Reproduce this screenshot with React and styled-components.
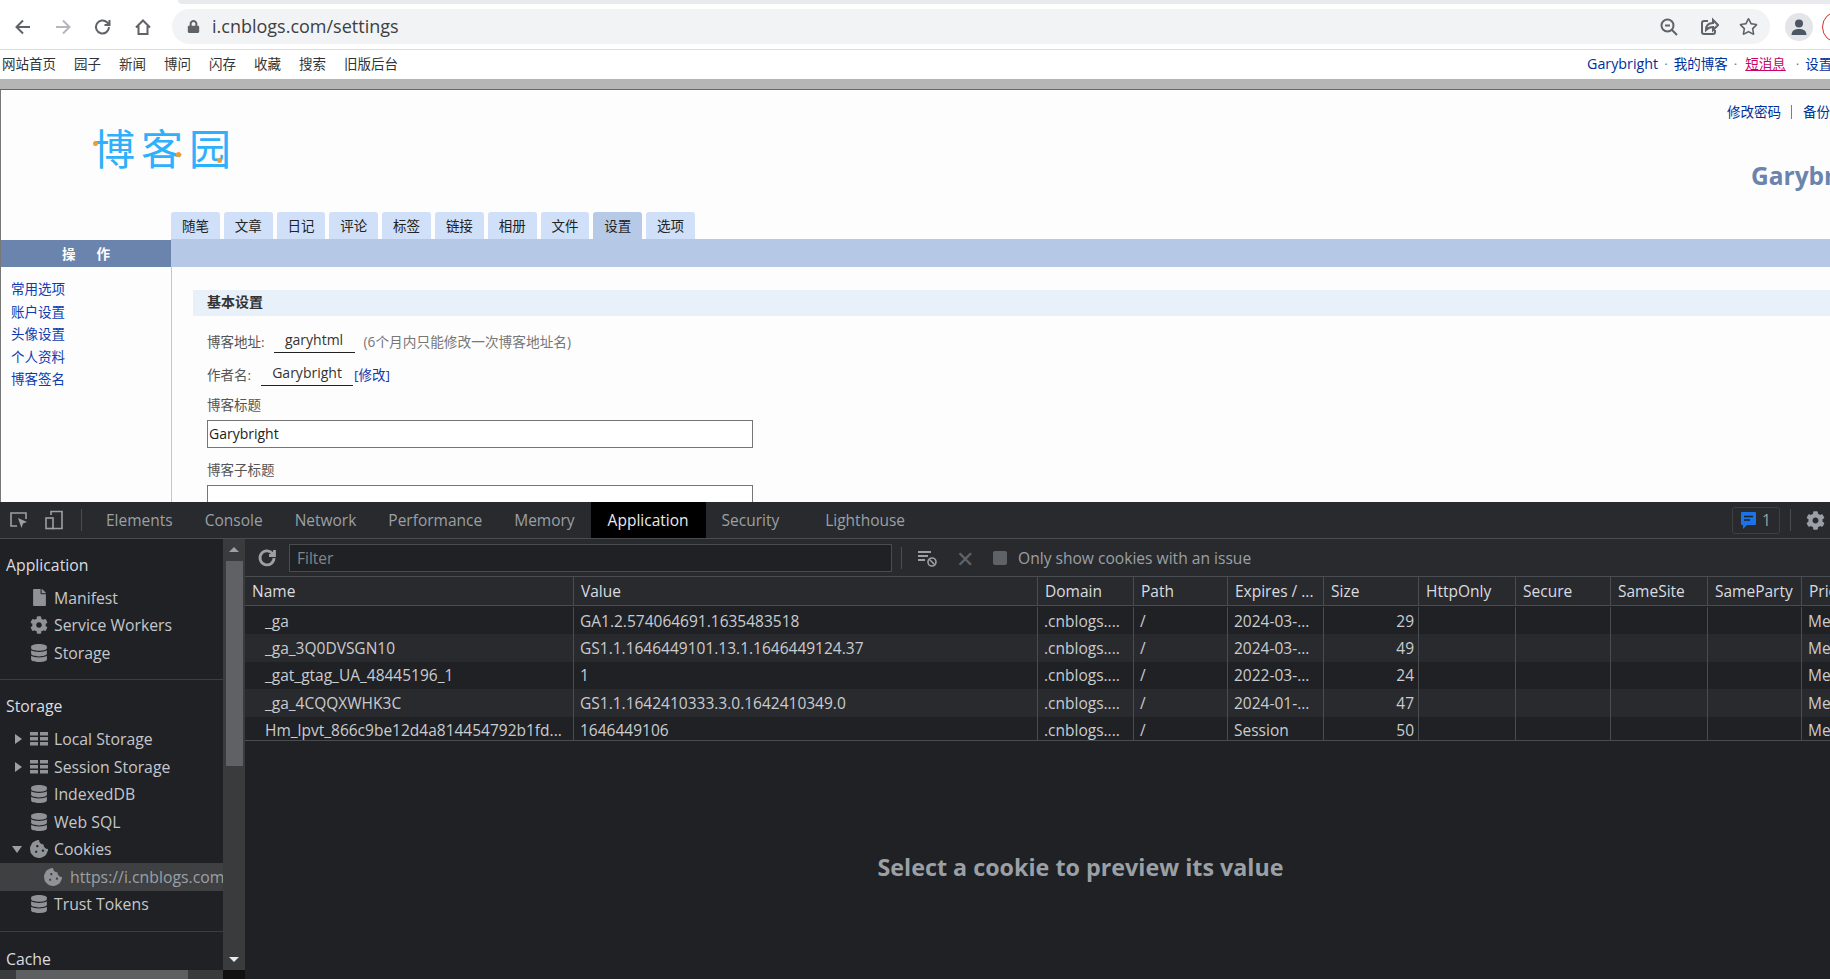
import React from 'react';
import styled, { createGlobalStyle } from 'styled-components';
import { FaCog, FaCookieBite, FaDatabase, FaFile, FaLock, FaRegStar } from 'react-icons/fa';

const GlobalStyle = createGlobalStyle`
  html, body {
    margin: 0;
    padding: 0;
    background: #fff;
    overflow: hidden;
  }
  * {
    box-sizing: border-box;
  }
`;

const uiFont = '"Open Sans", "Noto Sans CJK SC", sans-serif';
const pageFont = '"Open Sans", "Noto Sans CJK SC", sans-serif';

const Screen = styled.div`
  width: 1830px;
  height: 979px;
  display: flex;
  flex-direction: column;
  overflow: hidden;
  font-family: ${pageFont};
`;

/* browser chrome */
const TabStrip = styled.div`
  height: 4px;
  flex: none;
  background: #e8eaed;
  margin-left: 178px;
  border-bottom-left-radius: 4px;
`;

const Toolbar = styled.div`
  height: 46px;
  flex: none;
  display: flex;
  align-items: center;
  border-bottom: 1px solid #dadce0;
  overflow: hidden;
`;

const NavGroup = styled.div`
  width: 172px;
  flex: none;
  display: flex;
  align-items: center;
  padding-left: 13px;
  gap: 20px;
`;

const NavIcon = styled.svg`
  width: 20px;
  height: 20px;
  flex: none;
  fill: none;
  stroke: ${p => p.$color || '#5f6368'};
  stroke-width: 2;
`;

const Omnibox = styled.div`
  width: 1598px;
  height: 35px;
  flex: none;
  display: flex;
  align-items: center;
  background: #f1f3f4;
  border-radius: 18px;
  padding: 0 12px 0 15px;
  color: #5f6368;
`;

const Url = styled.span`
  margin-left: 12px;
  padding-bottom: 2px;
  flex: 1;
  font: 18px ${uiFont};
  color: #3c4043;
`;

const OmniActions = styled.div`
  display: flex;
  align-items: center;
  gap: 20px;
`;

const Avatar = styled.div`
  width: 28px;
  height: 28px;
  flex: none;
  margin-left: 15px;
  border-radius: 50%;
  background: #e3e5e9;
  display: flex;
  align-items: center;
  justify-content: center;
`;

const UpdatePill = styled.div`
  width: 32px;
  height: 32px;
  flex: none;
  margin-left: 9px;
  border-radius: 50%;
  border: 1px solid #d93025;
`;

const BookmarkBar = styled.div`
  height: 29px;
  flex: none;
  display: flex;
  align-items: center;
  justify-content: space-between;
  padding: 0 0 3px 2px;
  background: #fff;
  font-size: 13.5px;
  white-space: nowrap;
  overflow: hidden;
`;

const BookmarkLeft = styled.div`
  display: flex;
  gap: 18px;
  color: #333;
`;

const BookmarkRight = styled.div`
  display: flex;
  align-items: baseline;
  gap: 6px;
  width: 243px;
  flex: none;
  color: #00309c;
`;

const UserName = styled.span`
  font-size: 14.3px;
`;

const Dot = styled.span`
  color: #777;
`;

const MessageLink = styled.span`
  color: #cc0066;
  text-decoration: underline;
  padding: 0 4px 0 2px;
`;

const GreyBand = styled.div`
  height: 11px;
  flex: none;
  background: #b5b5b5;
  border-bottom: 1px solid #666;
`;

/* cnblogs page */
const Page = styled.div`
  height: 412px;
  flex: none;
  border-left: 1px solid #777;
  background: #fdfdfd;
  overflow: hidden;
`;

const PageTop = styled.div`
  height: 122px;
  display: flex;
  justify-content: space-between;
`;

const Logo = styled.div`
  position: relative;
  margin: 32px 0 0 92px;
  width: 140px;
  height: 50px;
  font: 400 42px/50px "Noto Sans CJK SC", sans-serif;
  letter-spacing: 6px;
  color: #2fb0fa;
  white-space: nowrap;
`;

const LogoDot = styled.i`
  position: absolute;
  width: 5px;
  height: 5px;
  border-radius: 50%;
  background: #f7992f;
  left: ${p => p.$x}px;
  top: ${p => p.$y}px;
`;

const TopRight = styled.div`
  width: 103px;
  flex: none;
  overflow: hidden;
  white-space: nowrap;
`;

const TopLinks = styled.div`
  margin-top: 13px;
  display: flex;
  align-items: center;
  gap: 8px;
  font-size: 13.5px;
  line-height: 18px;
  color: #00309c;
`;

const Divider = styled.span`
  width: 1px;
  height: 14px;
  background: #6a7fa5;
  margin: 0 3px 0 2px;
`;

const SiteName = styled.div`
  margin: 39px 0 0 24px;
  font-size: 24.5px;
  line-height: 32px;
  font-weight: 700;
  color: #6a84ae;
`;

const AdminTabs = styled.div`
  height: 27px;
  display: flex;
  gap: 4px;
  padding-left: 170px;
`;

const AdminTab = styled.div`
  width: 48.8px;
  display: flex;
  align-items: center;
  justify-content: center;
  padding-bottom: 2px;
  border-radius: 3px 3px 0 0;
  background: ${p => (p.$active ? '#b6c9e6' : '#cfe0f8')};
  color: #222;
  font-size: 13.5px;
`;

const BandRow = styled.div`
  height: 28px;
  display: flex;
`;

const BandTitle = styled.div`
  width: 170px;
  flex: none;
  margin-top: 1px;
  display: flex;
  align-items: center;
  justify-content: center;
  gap: 21px;
  padding-bottom: 2px;
  background: #6a84ae;
  color: #fff;
  font-size: 13.5px;
  font-weight: 700;
`;

const Band = styled.div`
  flex: 1;
  background: #b5c9e7;
`;

const ContentRow = styled.div`
  display: flex;
  height: 235px;
`;

const SideLinks = styled.div`
  width: 171px;
  flex: none;
  border-right: 1px solid #b5c9e7;
  padding: 11px 0 0 10px;
  display: flex;
  flex-direction: column;
`;

const SideLink = styled.div`
  height: 22.5px;
  line-height: 22.5px;
  font-size: 13.5px;
  color: #0d3bb0;
`;

const MainPane = styled.div`
  flex: 1;
  padding: 23px 0 0 21px;
`;

const SectionTitle = styled.div`
  height: 26px;
  padding-left: 14px;
  background: #e8f0fa;
  color: #333;
  font-size: 14px;
  font-weight: 700;
  line-height: 23px;
`;

const Form = styled.div`
  padding: 13px 0 0 14px;
  color: #555;
  font-size: 13.5px;
`;

const FieldRow = styled.div`
  display: flex;
  align-items: center;
  height: 24px;
  margin-bottom: ${p => p.$gap || 0}px;
  white-space: nowrap;
`;

const FixedValue = styled.span`
  width: ${p => p.$w}px;
  margin-left: ${p => p.$left}px;
  text-align: center;
  height: 24px;
  line-height: 22px;
  border-bottom: 1px solid #222;
  color: #333;
  font-size: 14px;
`;

const Hint = styled.span`
  margin-left: 9px;
  color: #777;
  font-size: 13.7px;
`;

const EditLink = styled.span`
  margin-left: 1px;
  color: #0d3bb0;
`;

const FieldLabel = styled.div`
  height: 18px;
  line-height: 16px;
  margin-top: ${p => p.$top}px;
`;

const TextBox = styled.div`
  width: 546px;
  height: 28px;
  margin-top: 5px;
  padding-left: 1px;
  border: 1px solid #767676;
  background: #fff;
  color: #222;
  font-size: 14px;
  line-height: 26px;
`;

/* devtools */
const Devtools = styled.div`
  flex: 1;
  min-height: 0;
  display: flex;
  flex-direction: column;
  background: #202124;
  font-family: ${uiFont};
  color: #bdc1c6;
  overflow: hidden;
`;

const DevTabs = styled.div`
  height: 37px;
  flex: none;
  display: flex;
  align-items: stretch;
  background: #292a2d;
  border-bottom: 1px solid #494c50;
`;

const DevLeft = styled.div`
  width: 90px;
  flex: none;
  display: flex;
  align-items: center;
  padding-left: 8px;
  gap: 13px;
`;

const DevIcon = styled.svg`
  width: 22px;
  height: 22px;
  flex: none;
  margin-left: ${p => p.$left || 0}px;
  fill: none;
  stroke: #9aa0a6;
  stroke-width: 1.6;
`;

const VSep = styled.span`
  width: 1px;
  height: 22px;
  flex: none;
  margin-left: ${p => p.$left || 0}px;
  background: #494c50;
`;

const DevTab = styled.div`
  padding: 0 ${p => (p.$active ? 17 : 16)}px;
  margin-right: ${p => p.$after || 0}px;
  display: flex;
  align-items: center;
  font-size: 15.5px;
  background: ${p => (p.$active ? '#000' : 'transparent')};
  color: ${p => (p.$active ? '#e8eaed' : '#9aa0a6')};
`;

const DevRight = styled.div`
  margin-left: auto;
  display: flex;
  align-items: center;
  padding-right: 5px;
  color: #9aa0a6;
`;

const IssueBadge = styled.div`
  width: 48px;
  height: 27px;
  display: flex;
  align-items: center;
  justify-content: center;
  gap: 6px;
  border: 1px solid #3c4043;
  border-radius: 3px;
  font-size: 15.5px;
  margin-right: 10px;
`;

const GearWrap = styled.div`
  margin-left: 15px;
  display: flex;
  font-size: 19px;
`;

const DevBody = styled.div`
  flex: 1;
  min-height: 0;
  display: flex;
`;

const Sidebar = styled.div`
  width: 245px;
  flex: none;
  display: grid;
  grid-template-columns: 223px 22px;
  grid-template-rows: 1fr 9px;
  min-height: 0;
`;

const Tree = styled.div`
  overflow: hidden;
  white-space: nowrap;
  font-size: 15.8px;
  padding-top: 12px;
`;

const TreeHead = styled.div`
  height: 28px;
  line-height: 28px;
  padding-left: 6px;
  color: #dadce0;
  margin-bottom: ${p => p.$after || 0}px;
`;

const TreeItem = styled.div`
  height: 27.5px;
  display: flex;
  align-items: center;
  padding-left: ${p => (p.$deep ? 44 : 12)}px;
  background: ${p => (p.$selected ? '#3f4042' : 'transparent')};
  color: ${p => (p.$selected ? '#9aa0a6' : '#c4c7cb')};
`;

const Caret = styled.span`
  width: 0;
  height: 0;
  flex: none;
  margin: 0 3px;
  ${p =>
    p.$open
      ? 'border-left: 5px solid transparent; border-right: 5px solid transparent; border-top: 7px solid #9aa0a6; margin: 0;'
      : 'border-top: 5px solid transparent; border-bottom: 5px solid transparent; border-left: 7px solid #9aa0a6;'}
`;

const CaretSlot = styled.span`
  width: 18px;
  flex: none;
  display: flex;
`;

const TreeIcon = styled.span`
  width: 18px;
  margin-right: 6px;
  flex: none;
  display: flex;
  justify-content: center;
  color: #8f9398;
  font-size: ${p => p.$size || 18}px;
`;

const DeepIcon = styled(TreeIcon)`
  margin-right: 8px;
`;

const TreeRule = styled.div`
  height: 1px;
  background: #3c3d40;
  margin: ${p => p.$m};
`;

const VScroll = styled.div`
  background: #3a3b3d;
  display: flex;
  flex-direction: column;
  align-items: center;
  padding-top: 8px;
  min-height: 0;
`;

const ArrowUp = styled.span`
  width: 0;
  height: 0;
  border-left: 5px solid transparent;
  border-right: 5px solid transparent;
  border-bottom: 5px solid #9aa0a6;
`;

const ArrowDown = styled.span`
  width: 0;
  height: 0;
  margin-top: auto;
  margin-bottom: 8px;
  border-left: 5px solid transparent;
  border-right: 5px solid transparent;
  border-top: 5px solid #e8eaed;
`;

const Thumb = styled.div`
  width: 17px;
  height: 205px;
  margin-top: 9px;
  background: #5f6164;
`;

const HScroll = styled.div`
  background: #3a3b3d;
  padding-left: 16px;
`;

const HThumb = styled.div`
  width: 172px;
  height: 100%;
  background: #5e5f61;
`;

const ScrollCorner = styled.div`
  background: #111;
`;

const CookiePane = styled.div`
  flex: 1;
  min-width: 0;
  display: flex;
  flex-direction: column;
  white-space: nowrap;
`;

const FilterBar = styled.div`
  height: 37px;
  flex: none;
  display: flex;
  align-items: center;
  background: #292a2d;
  padding-left: 11px;
  color: #9aa0a6;
`;

const FilterInput = styled.div`
  width: 603px;
  height: 28px;
  margin-left: 11px;
  padding-left: 7px;
  border: 1px solid #4a4c50;
  background: #202124;
  color: #80868b;
  font-size: 15.5px;
  line-height: 27px;
`;

const ClearX = styled.span`
  margin: 0 19px 0 18px;
  color: #5f6368;
  font-size: 22px;
  line-height: 22px;
  font-weight: 300;
`;

const Check = styled.span`
  width: 14px;
  height: 14px;
  flex: none;
  border-radius: 2px;
  background: #5f6368;
`;

const CheckLabel = styled.span`
  margin-left: 11px;
  font-size: 15.6px;
  color: #9aa0a6;
`;

const columns = '329px 464px 96px 94px 96px 95px 97px 95px 97px 94px 28px';

const HeadRow = styled.div`
  height: 30px;
  flex: none;
  display: grid;
  grid-template-columns: ${columns};
  background: #292a2d;
  border-top: 1px solid #494c50;
  border-bottom: 1px solid #494c50;
  color: #dadce0;
  font-size: 15.5px;
`;

const Cell = styled.div`
  padding: 0 ${p => (p.$num ? 4 : 6)}px 0 ${p => (p.$indent ? 20 : 6)}px;
  display: flex;
  align-items: center;
  justify-content: ${p => (p.$num ? 'flex-end' : 'flex-start')};
  border-right: 1px solid #494c50;
  overflow: hidden;
  &:last-child {
    border-right: none;
  }
`;

const HeadCell = styled(Cell)`
  padding-left: 7px;
`;

const Rows = styled.div`
  height: 135px;
  flex: none;
  padding-top: 1px;
  border-bottom: 1px solid #494c50;
  overflow: hidden;
`;

const Row = styled.div`
  height: 27.4px;
  display: grid;
  grid-template-columns: ${columns};
  background: ${p => (p.$stripe ? '#292a2d' : 'transparent')};
  color: #c9ccd0;
  font-size: 15.5px;
`;

const Preview = styled.div`
  flex: 1;
  display: flex;
  align-items: flex-start;
  justify-content: center;
  padding: 110px 0 0 86px;
  color: #9aa0a6;
  font-size: 23.3px;
  font-weight: 700;
`;

const bookmarks = ['网站首页', '园子', '新闻', '博问', '闪存', '收藏', '搜索', '旧版后台'];
const adminTabs = ['随笔', '文章', '日记', '评论', '标签', '链接', '相册', '文件', '设置', '选项'];
const sideLinks = ['常用选项', '账户设置', '头像设置', '个人资料', '博客签名'];
const devTabs = ['Elements', 'Console', 'Network', 'Performance', 'Memory', 'Application', 'Security', 'Lighthouse'];
const headers = ['Name', 'Value', 'Domain', 'Path', 'Expires / ...', 'Size', 'HttpOnly', 'Secure', 'SameSite', 'SameParty', 'Priority'];
const cookies = [
  ['_ga', 'GA1.2.574064691.1635483518', '2024-03-...', 29],
  ['_ga_3Q0DVSGN10', 'GS1.1.1646449101.13.1.1646449124.37', '2024-03-...', 49],
  ['_gat_gtag_UA_48445196_1', '1', '2022-03-...', 24],
  ['_ga_4CQQXWHK3C', 'GS1.1.1642410333.3.0.1642410349.0', '2024-01-...', 47],
  ['Hm_lpvt_866c9be12d4a814454792b1fd...', '1646449106', 'Session', 50],
];

const GridGlyph = () => (
  <svg width="18" height="14" viewBox="0 0 18 14" fill="#8f9398">
    <rect x="0" y="0" width="8" height="3.5" />
    <rect x="10" y="0" width="8" height="3.5" />
    <rect x="0" y="5" width="8" height="3.5" />
    <rect x="10" y="5" width="8" height="3.5" />
    <rect x="0" y="10" width="8" height="3.5" />
    <rect x="10" y="10" width="8" height="3.5" />
  </svg>
);

const App = () => (
  <Screen>
    <GlobalStyle />
    <TabStrip />
    <Toolbar>
      <NavGroup>
        <NavIcon viewBox="0 0 20 20"><path d="M17 10H4M10 3.5 3.5 10l6.5 6.5" /></NavIcon>
        <NavIcon viewBox="0 0 20 20" $color="#b4b7bb"><path d="M3 10h13M10 3.5l6.500 6.500-6.500 6.500" /></NavIcon>
        <NavIcon viewBox="0 0 20 20"><path d="M16 10a6.500 6.500 0 1 1-2-4.700L16.500 8M16.500 3v5h-5" /></NavIcon>
        <NavIcon viewBox="0 0 20 20"><path d="M3 10.500 10 3.500l7 7M5.500 9v8h9V9" /></NavIcon>
      </NavGroup>
      <Omnibox>
        <FaLock size={13} />
        <Url>i.cnblogs.com/settings</Url>
        <OmniActions>
          <NavIcon viewBox="0 0 20 20"><circle cx="8.500" cy="8.500" r="6" /><path d="M13 13l5 5M6 8.500h5" /></NavIcon>
          <NavIcon viewBox="0 0 20 20"><path d="M9 4H5a2 2 0 0 0-2 2v9a2 2 0 0 0 2 2h9a2 2 0 0 0 2-2v-2M7 13c0-5 3-7 7-7V3l5 5-5 5v-3c-3 0-5 1-7 3z" /></NavIcon>
          <FaRegStar size={19} />
        </OmniActions>
      </Omnibox>
      <Avatar>
        <svg width="18" height="18" viewBox="0 0 18 18" fill="#4d5665">
          <circle cx="9" cy="5.500" r="4" />
          <path d="M1.500 17c0-4.500 3.500-6 7.500-6s7.500 1.500 7.500 6z" />
        </svg>
      </Avatar>
      <UpdatePill />
    </Toolbar>
    <BookmarkBar>
      <BookmarkLeft>
        {bookmarks.map(item => <span key={item}>{item}</span>)}
      </BookmarkLeft>
      <BookmarkRight>
        <UserName>Garybright</UserName>
        <Dot>·</Dot>
        <span>我的博客</span>
        <Dot>·</Dot>
        <MessageLink>短消息</MessageLink>
        <Dot>·</Dot>
        <span>设置</span>
      </BookmarkRight>
    </BookmarkBar>
    <GreyBand />

    <Page>
      <PageTop>
        <Logo>
          博客园
          <LogoDot $x={-0.5} $y={18.5} />
          <LogoDot $x={82.5} $y={29.5} />
          <LogoDot $x={123.5} $y={35.5} />
        </Logo>
        <TopRight>
          <TopLinks>
            <span>修改密码</span>
            <Divider />
            <span>备份</span>
          </TopLinks>
          <SiteName>Garybright</SiteName>
        </TopRight>
      </PageTop>
      <AdminTabs>
        {adminTabs.map(tab => <AdminTab key={tab} $active={tab === '设置'}>{tab}</AdminTab>)}
      </AdminTabs>
      <BandRow>
        <BandTitle><span>操</span><span>作</span></BandTitle>
        <Band />
      </BandRow>
      <ContentRow>
        <SideLinks>
          {sideLinks.map(link => <SideLink key={link}>{link}</SideLink>)}
        </SideLinks>
        <MainPane>
          <SectionTitle>基本设置</SectionTitle>
          <Form>
            <FieldRow $gap={9}>
              博客地址:
              <FixedValue $w={81} $left={9}>garyhtml</FixedValue>
              <Hint>(6个月内只能修改一次博客地址名)</Hint>
            </FieldRow>
            <FieldRow>
              作者名:
              <FixedValue $w={92} $left={10}>Garybright</FixedValue>
              <EditLink>[修改]</EditLink>
            </FieldRow>
            <FieldLabel $top={11}>博客标题</FieldLabel>
            <TextBox>Garybright</TextBox>
            <FieldLabel $top={14}>博客子标题</FieldLabel>
            <TextBox />
          </Form>
        </MainPane>
      </ContentRow>
    </Page>

    <Devtools>
      <DevTabs>
        <DevLeft>
          <DevIcon viewBox="0 0 22 22">
            <path d="M9 17H3V4h15v6" />
            <path d="M10 9l9 4-4 1.500-1.500 4.500z" fill="#9aa0a6" stroke="none" />
          </DevIcon>
          <DevIcon viewBox="0 0 22 22">
            <path d="M8 6V2.500h11v17H9" />
            <rect x="3" y="9" width="7" height="10.500" />
          </DevIcon>
          <VSep $left={3} />
        </DevLeft>
        {devTabs.map(tab => (
          <DevTab key={tab} $active={tab === 'Application'} $after={tab === 'Security' ? 14 : 0}>{tab}</DevTab>
        ))}
        <DevRight>
          <IssueBadge>
            <svg width="15" height="17" viewBox="0 0 15 17">
              <path d="M1 0h13a1 1 0 0 1 1 1v11a1 1 0 0 1-1 1H6l-4 4v-4H1a1 1 0 0 1-1-1V1a1 1 0 0 1 1-1z" fill="#1a73e8" />
              <path d="M3 4.500h9M3 8h6" stroke="#202124" strokeWidth="1.500" />
            </svg>
            1
          </IssueBadge>
          <VSep />
          <GearWrap><FaCog /></GearWrap>
        </DevRight>
      </DevTabs>
      <DevBody>
        <Sidebar>
          <Tree>
            <TreeHead $after={5}>Application</TreeHead>
            <TreeItem>
              <CaretSlot />
              <TreeIcon $size={17}><FaFile /></TreeIcon>Manifest
            </TreeItem>
            <TreeItem>
              <CaretSlot />
              <TreeIcon><FaCog /></TreeIcon>Service Workers
            </TreeItem>
            <TreeItem>
              <CaretSlot />
              <TreeIcon><FaDatabase /></TreeIcon>Storage
            </TreeItem>
            <TreeRule $m="12px 0 12px" />
            <TreeHead $after={6}>Storage</TreeHead>
            <TreeItem>
              <CaretSlot><Caret /></CaretSlot>
              <TreeIcon><GridGlyph /></TreeIcon>Local Storage
            </TreeItem>
            <TreeItem>
              <CaretSlot><Caret /></CaretSlot>
              <TreeIcon><GridGlyph /></TreeIcon>Session Storage
            </TreeItem>
            <TreeItem>
              <CaretSlot />
              <TreeIcon><FaDatabase /></TreeIcon>IndexedDB
            </TreeItem>
            <TreeItem>
              <CaretSlot />
              <TreeIcon><FaDatabase /></TreeIcon>Web SQL
            </TreeItem>
            <TreeItem>
              <CaretSlot><Caret $open /></CaretSlot>
              <TreeIcon><FaCookieBite /></TreeIcon>Cookies
            </TreeItem>
            <TreeItem $deep $selected>
              <DeepIcon><FaCookieBite /></DeepIcon>https://i.cnblogs.com
            </TreeItem>
            <TreeItem>
              <CaretSlot />
              <TreeIcon><FaDatabase /></TreeIcon>Trust Tokens
            </TreeItem>
            <TreeRule $m="13px 0 13px" />
            <TreeHead>Cache</TreeHead>
          </Tree>
          <VScroll>
            <ArrowUp />
            <Thumb />
            <ArrowDown />
          </VScroll>
          <HScroll><HThumb /></HScroll>
          <ScrollCorner />
        </Sidebar>
        <CookiePane>
          <FilterBar>
            <DevIcon viewBox="0 0 22 22">
              <path d="M18 11a7 7 0 1 1-2-5l2 2M18.500 3v5.500H13" strokeWidth="2.800" />
            </DevIcon>
            <FilterInput>Filter</FilterInput>
            <VSep $left={9} />
            <DevIcon viewBox="0 0 22 22" $left={14}>
              <path d="M2 5h13M2 9h10M2 13h7" strokeWidth="2" />
              <circle cx="16" cy="15" r="4" />
              <path d="M13.500 12.500l5 5" />
            </DevIcon>
            <ClearX>✕</ClearX>
            <Check />
            <CheckLabel>Only show cookies with an issue</CheckLabel>
          </FilterBar>
          <HeadRow>
            {headers.map(h => <HeadCell key={h}>{h}</HeadCell>)}
          </HeadRow>
          <Rows>
            {cookies.map(([name, value, expires, size], i) => (
              <Row key={name} $stripe={i % 2 === 1}>
                <Cell $indent>{name}</Cell>
                <Cell>{value}</Cell>
                <Cell>.cnblogs....</Cell>
                <Cell>/</Cell>
                <Cell>{expires}</Cell>
                <Cell $num>{size}</Cell>
                <Cell />
                <Cell />
                <Cell />
                <Cell />
                <Cell>Medium</Cell>
              </Row>
            ))}
          </Rows>
          <Preview>Select a cookie to preview its value</Preview>
        </CookiePane>
      </DevBody>
    </Devtools>
  </Screen>
);

export default App;
